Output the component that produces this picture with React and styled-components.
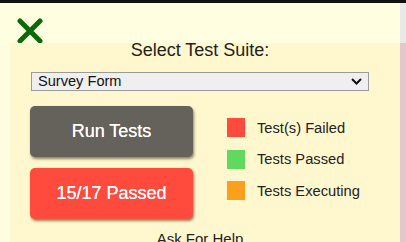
import React from 'react';
import styled, { createGlobalStyle } from 'styled-components';

const GlobalStyles = createGlobalStyle`
  html, body {
    margin: 0;
    padding: 0;
    background: #fffde1;
    font-family: "Liberation Sans", Arial, sans-serif;
    overflow: hidden;
  }
`;

const Page = styled.div`
  width: 406px;
  height: 242px;
  border-top: 3px solid #111;
  display: flex;
  overflow: hidden;
`;

const Main = styled.div`
  width: 400px;
  display: flex;
  flex-direction: column;
`;

const Header = styled.div`
  height: 40px;
  background: #fffee0;
  padding: 15px 0 0 17px;
  box-sizing: border-box;
`;

const Body = styled.div`
  flex: 1;
  background: #fffde1;
  padding-left: 10px;
  display: flex;
`;

const Panel = styled.div`
  flex: 1;
  background: #fff8cf;
  padding-right: 10px;
  display: flex;
  flex-direction: column;
`;

const Title = styled.div`
  font-size: 18px;
  line-height: 14px;
  text-align: center;
  color: #222;
`;

const SelectWrap = styled.div`
  position: relative;
  margin: 15px 21px 0;
  height: 19px;
`;

const Select = styled.select`
  appearance: none;
  width: 100%;
  height: 19px;
  box-sizing: border-box;
  border: 1px solid #9b9b9b;
  background: #efefef;
  font-family: "Liberation Sans", Arial, sans-serif;
  font-size: 14.6px;
  line-height: 17px;
  color: #111;
  padding: 0 0 0 6px;
  outline: none;
`;

const Chevron = styled.svg`
  position: absolute;
  right: 7px;
  top: 6px;
  pointer-events: none;
`;

const Row = styled.div`
  display: flex;
  margin-top: 15px;
  padding-left: 20px;
`;

const Buttons = styled.div`
  display: flex;
  flex-direction: column;
  gap: 11px;
`;

const Button = styled.button`
  width: 163px;
  height: 51px;
  border: none;
  border-radius: 5px;
  background: ${p => p.$bg};
  color: #fff;
  font-family: "Liberation Sans", Arial, sans-serif;
  font-size: 18px;
  text-shadow: 0 0 0.4px #fff;
  box-shadow: 1px 2px 3px rgba(40, 30, 0, 0.55);
  cursor: pointer;
`;

const Legend = styled.div`
  display: flex;
  flex-direction: column;
  gap: 12.5px;
  margin-left: 34px;
  padding-top: 12px;
`;

const LegendItem = styled.div`
  display: flex;
  align-items: center;
  gap: 12px;
  font-size: 14.7px;
  color: #222;
`;

const Swatch = styled.span`
  width: 18px;
  height: 19px;
  background: ${p => p.$color};
  display: block;
`;

const Help = styled.div`
  margin-top: 11px;
  text-align: center;
  font-size: 15px;
  color: #222;
`;

const Side = styled.div`
  width: 6px;
  display: flex;
  flex-direction: column;
`;

const SideTop = styled.div`
  height: 40px;
  background: #e9e9e9;
`;

const SideRest = styled.div`
  flex: 1;
  background: #e4c6cd;
`;

const CloseIcon = () => (
  <svg width="26" height="26" viewBox="0 0 26 26">
    <path d="M3 3 L23 23 M23 3 L3 23" stroke="#0a6a0a" strokeWidth="5" strokeLinecap="round" fill="none" />
  </svg>
);

const legend = [
  { color: '#ff4b3e', label: 'Test(s) Failed' },
  { color: '#61d85e', label: 'Tests Passed' },
  { color: '#fba01c', label: 'Tests Executing' },
];

export default function App() {
  return (
    <>
      <GlobalStyles />
      <Page>
        <Main>
          <Header>
            <CloseIcon />
          </Header>
          <Body>
            <Panel>
              <Title>Select Test Suite:</Title>
              <SelectWrap>
                <Select defaultValue="survey">
                  <option value="survey">Survey Form</option>
                </Select>
                <Chevron width="11" height="7" viewBox="0 0 11 7">
                  <path d="M1 1 L5.5 5.5 L10 1" stroke="#111" strokeWidth="2" fill="none" />
                </Chevron>
              </SelectWrap>
              <Row>
                <Buttons>
                  <Button $bg="#64625a">Run Tests</Button>
                  <Button $bg="#ff4a3e">15/17 Passed</Button>
                </Buttons>
                <Legend>
                  {legend.map(l => (
                    <LegendItem key={l.label}>
                      <Swatch $color={l.color} />
                      {l.label}
                    </LegendItem>
                  ))}
                </Legend>
              </Row>
              <Help>Ask For Help</Help>
            </Panel>
          </Body>
        </Main>
        <Side>
          <SideTop />
          <SideRest />
        </Side>
      </Page>
    </>
  );
}
